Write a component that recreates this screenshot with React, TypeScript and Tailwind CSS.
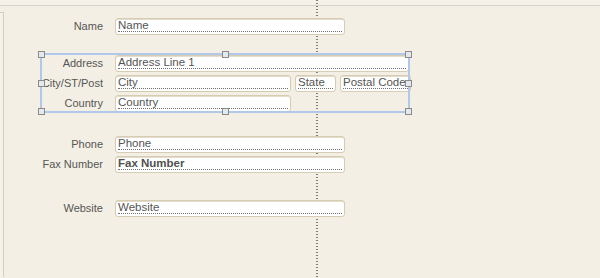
import React from "react";

const font = { fontFamily: '"Liberation Sans", Arial, sans-serif' };

function Field({ w, text, bold }: { w: string; text: string; bold?: boolean }) {
  return (
    <div
      className={`${w} h-[17px] bg-white border border-[#d6ccb4] rounded-[3px] shadow-[inset_0_1px_0_#e4ddcc] flex items-end px-[2px] pb-[2px] shrink-0`}
    >
      <div
        className={`w-full border-b border-dotted border-[#6e6e6e] text-[11.5px] leading-[11px] whitespace-nowrap overflow-hidden ${
          bold ? "font-bold text-[#505050]" : "text-[#555555]"
        }`}
      >
        {text}
      </div>
    </div>
  );
}

function Row({ label, children }: { label: string; children: React.ReactNode }) {
  return (
    <div className="flex items-center h-[17px]">
      <div className="w-[99px] text-right text-[11px] text-[#565656] whitespace-nowrap">{label}</div>
      <div className="ml-[12px] flex gap-[4px]">{children}</div>
    </div>
  );
}

function Handle() {
  return <div className="w-[7px] h-[7px] border border-[#8a8a8a] bg-[#e4e9ee]" />;
}

export default function App() {
  return (
    <div className="relative w-[600px] h-[278px] overflow-hidden bg-[#f3efe4]" style={font}>
      {/* top band */}
      <div className="h-[6px] bg-[#f4f1e8] border-b border-[#d9d4ca]" />
      {/* dotted guide */}
      <div className="absolute left-[316px] top-0 w-[2px] h-[278px] bg-[linear-gradient(to_bottom,#7e7e7e_50%,transparent_50%)] bg-[length:2px_3px]" />
      <div className="relative flex h-[271px]">
        {/* left panel edge */}
        <div className="w-[4px] mt-[6px] border-t border-r border-[#d2cdc3] bg-[#f5f2ea]" />
        <div className="flex flex-col pt-[12px]">
          <Row label="Name">
            <Field w="w-[230px]" text="Name" />
          </Row>
          <div className="relative mt-[20px] flex flex-col gap-[3px]">
            {/* selection */}
            <div className="absolute left-[36px] top-[-2px] w-[370px] h-[60px] border-2 border-[#b0c8ea]">
              <div className="absolute -left-[4px] -top-[4px]"><Handle /></div>
              <div className="absolute left-[180px] -top-[4px]"><Handle /></div>
              <div className="absolute -right-[4px] -top-[4px]"><Handle /></div>
              <div className="absolute -left-[4px] top-[25px]"><Handle /></div>
              <div className="absolute -right-[4px] top-[25px]"><Handle /></div>
              <div className="absolute -left-[4px] -bottom-[4px]"><Handle /></div>
              <div className="absolute left-[180px] -bottom-[4px]"><Handle /></div>
              <div className="absolute -right-[4px] -bottom-[4px]"><Handle /></div>
            </div>
            <Row label="Address">
              <Field w="w-[294px]" text="Address Line 1" />
            </Row>
            <Row label="City/ST/Post">
              <Field w="w-[176px]" text="City" />
              <Field w="w-[41px]" text="State" />
              <Field w="w-[71px]" text="Postal Code" />
            </Row>
            <Row label="Country">
              <Field w="w-[176px]" text="Country" />
            </Row>
          </div>
          <div className="mt-[24px] flex flex-col gap-[3px]">
            <Row label="Phone">
              <Field w="w-[230px]" text="Phone" />
            </Row>
            <Row label="Fax Number">
              <Field w="w-[230px]" text="Fax Number" bold />
            </Row>
          </div>
          <div className="mt-[27px]">
            <Row label="Website">
              <Field w="w-[230px]" text="Website" />
            </Row>
          </div>
        </div>
      </div>
    </div>
  );
}
